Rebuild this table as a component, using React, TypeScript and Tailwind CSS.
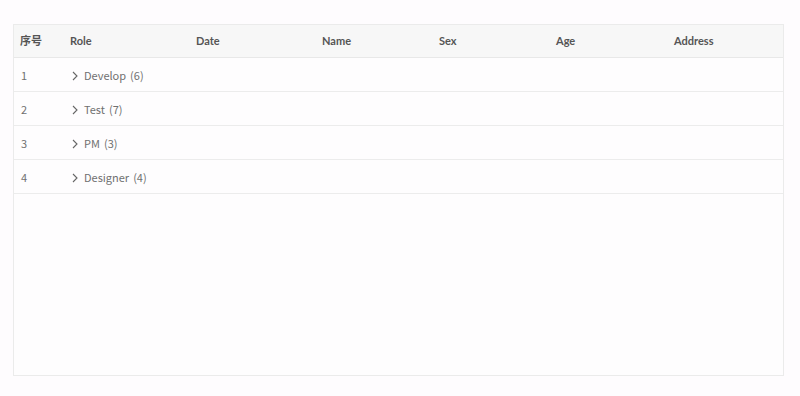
const COLUMNS = [
  { key: 'idx', label: '序号', w: 'w-[50px]' },
  { key: 'role', label: 'Role', w: 'w-[126px]' },
  { key: 'date', label: 'Date', w: 'w-[126px]' },
  { key: 'name', label: 'Name', w: 'w-[117px]' },
  { key: 'sex', label: 'Sex', w: 'w-[117px]' },
  { key: 'age', label: 'Age', w: 'w-[118px]' },
  { key: 'address', label: 'Address', w: 'flex-1' },
]

const GROUPS = [
  { id: 1, role: 'Develop', count: 6 },
  { id: 2, role: 'Test', count: 7 },
  { id: 3, role: 'PM', count: 3 },
  { id: 4, role: 'Designer', count: 4 },
]

function Chevron() {
  return (
    <svg width="8" height="10" viewBox="0 0 8 10" className="text-[#666] shrink-0 mt-[2px]">
      <polyline points="2,1 6,5 2,9" fill="none" stroke="currentColor" strokeWidth="1.1" />
    </svg>
  )
}

export default function App() {
  return (
    <div className="w-[800px] h-[396px] bg-[#fefcfe] pt-[24px] px-[13px] font-['Lato','Noto_Sans_CJK_SC',sans-serif]">
      <div className="w-[771px] h-[352px] border border-[#ebebeb] bg-[#fefdfe] flex flex-col">
        {/* header */}
        <div className="flex h-[33px] items-center bg-[#f7f7f7] border-b border-[#e8e8e8]">
          {COLUMNS.map(col => (
            <div key={col.key} className={`${col.w} pl-[6px] text-[11px] font-bold text-[#555]`}>
              {col.label}
            </div>
          ))}
        </div>

        {/* rows */}
        {GROUPS.map(g => (
          <div
            key={g.id}
            className="flex h-[34px] items-center pt-[1px] border-b border-[#ececec] text-[11px] text-[#707070] font-['Noto_Sans_CJK_SC',sans-serif]"
          >
            <div className="w-[50px] pl-[7px]">{g.id}</div>
            <div className="w-[126px] pl-[7px] flex items-center gap-[5px]">
              <Chevron />
              <span>
                {g.role}
                <span className="ml-[4px]">({g.count})</span>
              </span>
            </div>
          </div>
        ))}
      </div>
    </div>
  )
}
